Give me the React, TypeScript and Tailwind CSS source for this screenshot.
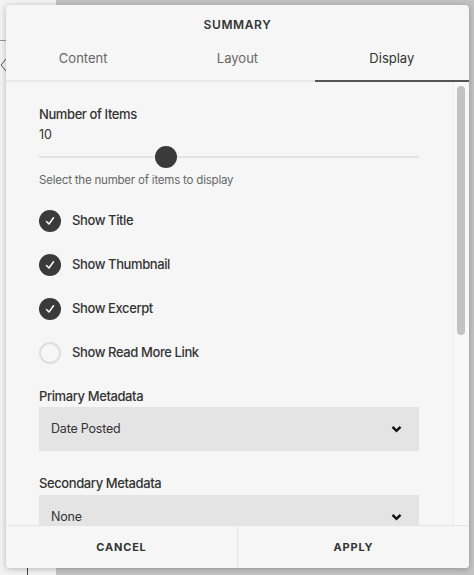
import React from "react";

const font = { fontFamily: "Inter, 'Liberation Sans', Arial, sans-serif" };

const Check = ({ checked, label }: { checked: boolean; label: string }) => (
  <div className="flex items-center h-[22px]">
    {checked ? (
      <span className="w-[22px] h-[22px] rounded-full bg-[#3a3a3a] flex items-center justify-center">
        <svg width="10" height="10" viewBox="0 0 10 10" fill="none">
          <path d="M1.5 5.5 L4 8 L8.5 1.8" stroke="#fff" strokeWidth="1.5" strokeLinecap="round" strokeLinejoin="round" />
        </svg>
      </span>
    ) : (
      <span className="w-[22px] h-[22px] rounded-full border-2 border-[#dedede]" />
    )}
    <span className="ml-[11px] text-[13px] font-medium text-[#333] tracking-[-0.4px]">{label}</span>
  </div>
);

const Select = ({ value }: { value: string }) => (
  <div className="h-[44px] bg-[#e4e4e4] flex items-center justify-between pl-[12px] pr-[17px]">
    <span className="text-[12.5px] tracking-[-0.2px] text-[#333]">{value}</span>
    <svg width="11" height="8" viewBox="0 0 11 8" fill="none">
      <path d="M1.5 1.8 L5.5 5.8 L9.5 1.8" stroke="#111" strokeWidth="2.4" />
    </svg>
  </div>
);

export default function App() {
  return (
    <div className="relative w-[474px] h-[575px] overflow-hidden bg-[#c3c3c3]" style={font}>
      {/* page behind the modal */}
      <div className="absolute left-0 top-0 bottom-0 w-[56px] bg-[#f3f3f3]">
        <div className="absolute left-0 top-[40px] w-[6px] h-px bg-[#999]" />
        <svg className="absolute left-0 top-[58px]" width="8" height="14" viewBox="0 0 8 14" fill="none">
          <path d="M6 1 L1 7 L6 13" stroke="#555" strokeWidth="1" />
        </svg>
        <div className="absolute left-[27px] bottom-0 w-px h-[7px] bg-[#444]" />
      </div>

      {/* modal */}
      <div className="absolute left-[6px] top-[5px] w-[463px] h-[563px] bg-[#f6f6f6] rounded-[4px] shadow-[0_1px_6px_rgba(0,0,0,0.25)] flex flex-col overflow-hidden">
        <div className="h-[40px] flex items-center justify-center text-[12px] font-semibold tracking-[0.6px] text-[#333]">
          SUMMARY
        </div>
        <div className="flex h-[37px] border-b-2 border-[#e8e8e8]">
          <div className="flex-1 text-center pt-[3px] leading-5 text-[13px] text-[#666]">Content</div>
          <div className="flex-1 text-center pt-[3px] leading-5 text-[13px] text-[#666]">Layout</div>
          <div className="flex-1 text-center pt-[3px] leading-5 text-[13px] text-[#333] border-b-2 border-[#555] -mb-[2px]">
            Display
          </div>
        </div>

        <div className="relative flex-1 overflow-hidden">
          <div className="pl-[33px] pr-[50px] pt-[22px] flex flex-col">
            <div className="leading-5 text-[13px] font-medium tracking-[-0.4px] text-[#333]">Number of Items</div>
            <div className="leading-5 text-[12.5px] text-[#333] mt-px">10</div>
            <div className="relative h-[22px] mt-px flex items-center">
              <div className="w-full h-[2px] bg-[#e2e2e2]" />
              <div className="absolute left-[116px] top-0 w-[22px] h-[22px] rounded-full bg-[#3a3a3a]" />
            </div>
            <div className="leading-4 text-[11.5px] tracking-[-0.2px] text-[#666] mt-[4px]">
              Select the number of items to display
            </div>

            <div className="flex flex-col gap-[22px] mt-[22px]">
              <Check checked label="Show Title" />
              <Check checked label="Show Thumbnail" />
              <Check checked label="Show Excerpt" />
              <Check checked={false} label="Show Read More Link" />
            </div>

            <div className="leading-5 text-[13px] font-medium tracking-[-0.4px] text-[#333] mt-[22px]">Primary Metadata</div>
            <div className="mt-px">
              <Select value="Date Posted" />
            </div>
            <div className="leading-5 text-[13px] font-medium tracking-[-0.4px] text-[#333] mt-[22px]">Secondary Metadata</div>
            <div className="mt-[2px]">
              <Select value="None" />
            </div>
          </div>

          {/* scrollbar */}
          <div className="absolute right-0 top-0 bottom-0 w-[16px] bg-[#f8f8f8] border-l border-[#ececec]">
            <div className="absolute left-[3px] top-[4px] w-[8px] h-[249px] rounded-full bg-[#c2c2c2]" />
          </div>
        </div>

        <div className="h-[43px] shrink-0 flex border-t border-[#e3e3e3] bg-[#f6f6f6]">
          <div className="flex-1 flex items-center justify-center text-[11px] font-bold tracking-[0.8px] text-[#333] border-r border-[#e3e3e3]">
            CANCEL
          </div>
          <div className="flex-1 flex items-center justify-center text-[11px] font-bold tracking-[0.8px] text-[#333]">
            APPLY
          </div>
        </div>
      </div>
    </div>
  );
}
